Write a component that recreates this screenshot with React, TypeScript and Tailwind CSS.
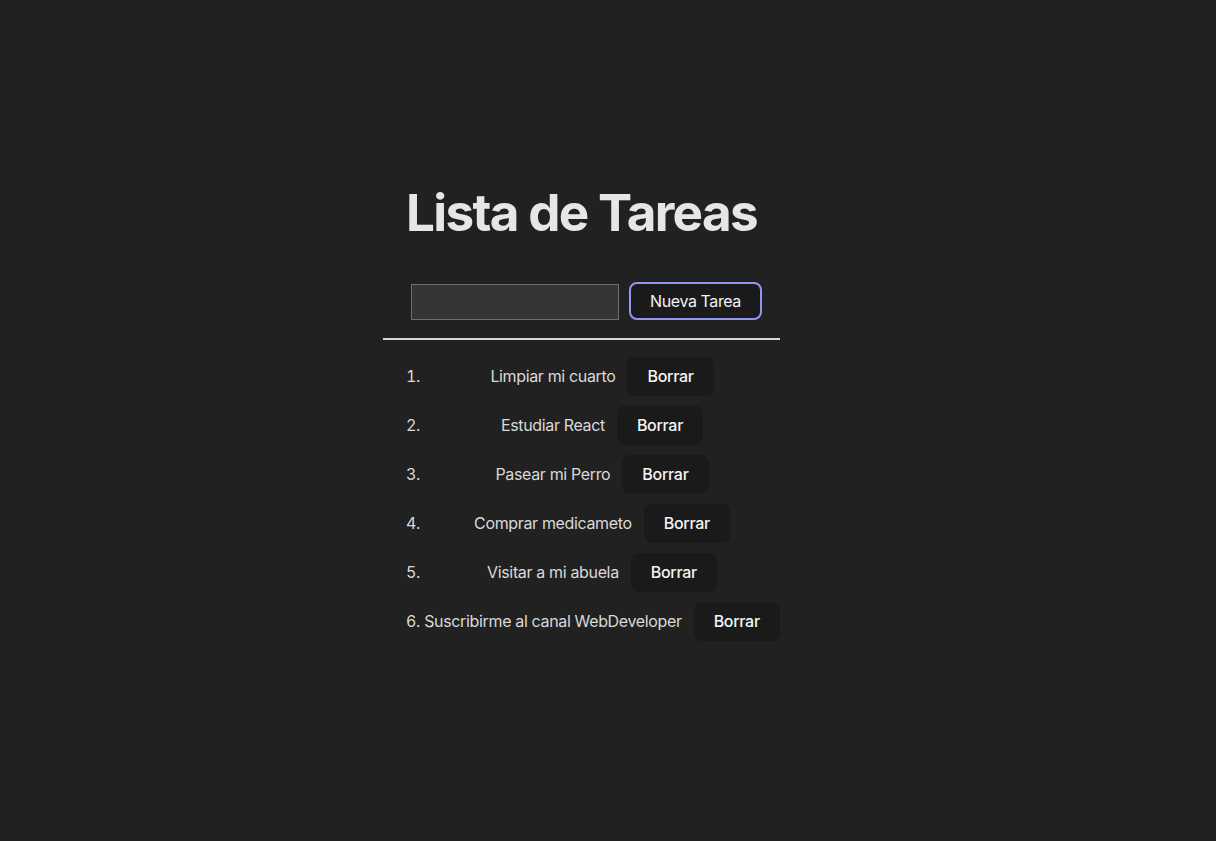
import React, { useState } from 'react';

const initialTasks = [
  'Limpiar mi cuarto',
  'Estudiar React',
  'Pasear mi Perro',
  'Comprar medicameto',
  'Visitar a mi abuela',
  'Suscribirme al canal WebDeveloper',
];

const App: React.FC = () => {
  const [tasks, setTasks] = useState<string[]>(initialTasks);
  const [text, setText] = useState('');

  const addTask = () => {
    if (!text.trim()) return;
    setTasks([...tasks, text.trim()]);
    setText('');
  };

  return (
    <div
      className="min-h-screen bg-[#212121] text-[#dedede] pt-[184px]"
      style={{ fontFamily: 'Inter, "Noto Sans", sans-serif' }}
    >
      <div className="ml-[383px] w-[397px] flex flex-col items-center">
        <h1 className="text-[51.2px] leading-[1.1] font-bold tracking-[-1.7px] text-[#e6e6e6]">
          Lista de Tareas
        </h1>

        <div className="mt-[42px] self-start ml-[28px] flex items-end gap-[10px]">
          <input
            value={text}
            onChange={(e) => setText(e.target.value)}
            className="w-[208px] h-[36px] bg-[#353535] border border-[#6f6f6f] px-2 text-[#eee] outline-none"
          />
          <button
            onClick={addTask}
            className="h-[38px] w-[133px] rounded-lg border-2 border-[#9396ee] bg-[#1a1a1a] text-[16px] leading-6 tracking-[-0.4px] text-[#f2f2f2]"
          >
            Nueva Tarea
          </button>
        </div>

        <hr className="mt-[18px] w-full border-0 border-t-2 border-[#d8d8d8]" />

        <ol className="mt-[17px] w-full list-decimal pl-[41px] text-center text-[16px] leading-6 tracking-[-0.35px] text-[#d9d9d9]">
          {tasks.map((task, i) => (
            <li key={i} className="mb-[10px] whitespace-nowrap">
              {task}
              <button
                onClick={() => setTasks(tasks.filter((_, j) => j !== i))}
                className="ml-[12px] inline-block h-[39px] px-[20px] rounded-lg bg-[#1a1a1a] font-medium text-[#f4f4f4] leading-[39px] tracking-[-0.3px] align-baseline"
              >
                Borrar
              </button>
            </li>
          ))}
        </ol>
      </div>
    </div>
  );
};

export default App;
